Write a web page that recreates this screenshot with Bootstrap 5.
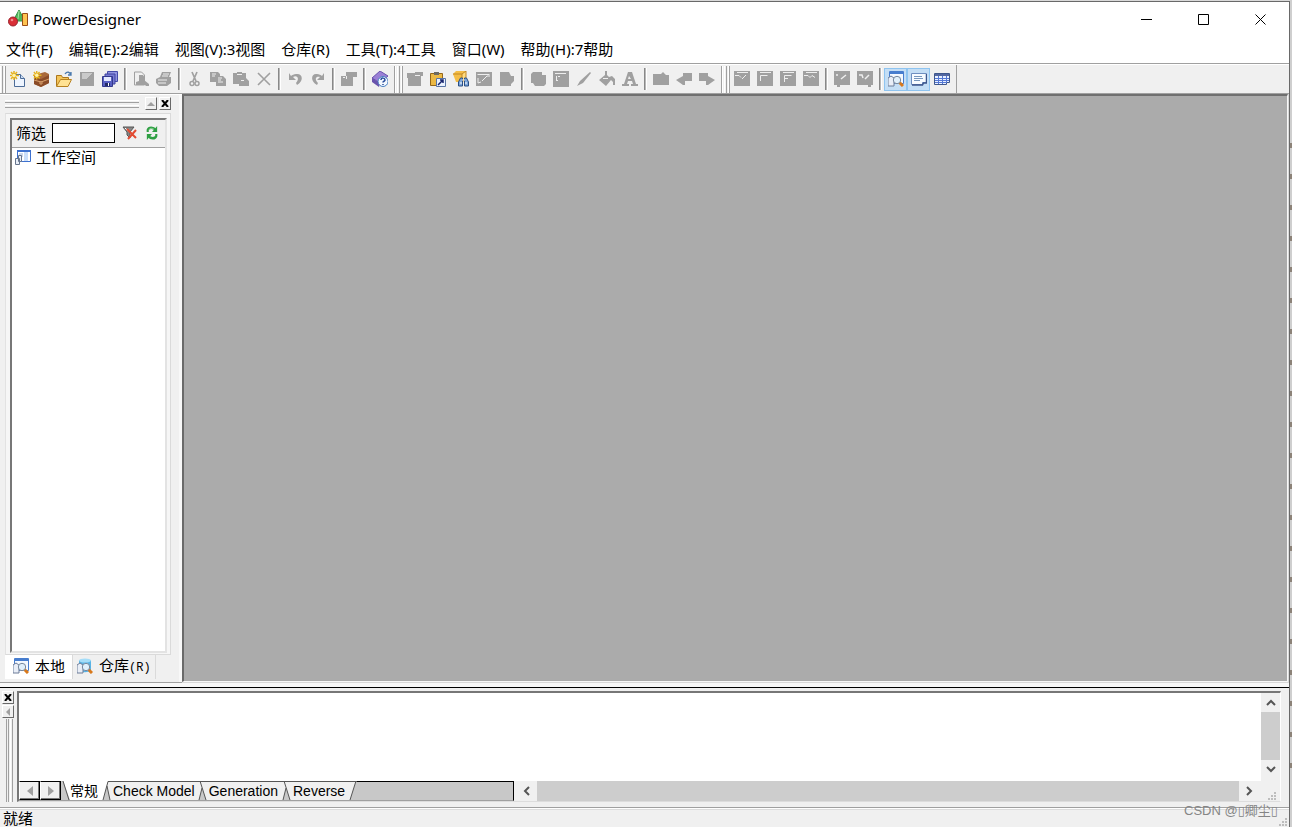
<!DOCTYPE html>
<html lang="zh-CN">
<head>
<meta charset="utf-8">
<meta name="viewport" content="width=device-width, initial-scale=1">
<title>PowerDesigner</title>
<link href="https://cdn.jsdelivr.net/npm/bootstrap@5.3.0/dist/css/bootstrap.min.css" rel="stylesheet">
<style>
:root{--face:#f0f0f0;--shade:#a0a0a0;--edge:#696969}
body{background:#d9d9d9;color:#000;font-family:"Noto Sans","Noto Sans CJK SC",sans-serif;font-size:15px;line-height:20px;overflow:hidden}
button{border:0;padding:0;background:none;color:inherit}
svg{display:block;flex:none}
.app{border-top:1px solid var(--edge);border-right:1px solid var(--edge);margin-top:1px;min-width:0}
.behind{width:2px;padding-top:143px;background:#cfcfcf}
.behind i{display:block;height:5px;margin-bottom:26px;background:#8c8278}
.title-row{height:34px;padding-left:8px}
.win-btn{width:57px;height:34px;display:grid;place-items:center}
.menu-row{height:27px;padding:0 0 2px 6px;gap:16px}
.menu-row a{color:#000;text-decoration:none;white-space:nowrap}
.tool-row{height:31px;border-top:1px solid var(--shade);background:var(--face);box-shadow:inset 0 1px #fff,inset 0 -1px var(--shade)}
.tb{width:23px;height:23px;padding:3px}
.tb.on{background:#c4def5;border:1px solid #8fc4f0;padding:2px}
.tb svg{width:16px;height:16px;margin-left:1px}
.g{fill:#a0a0a0;color:#a0a0a0}
.vsep{width:8px;height:22px;background:linear-gradient(90deg,#0000 3px,#888 3px 4px,#b8b8b8 4px 5px,#fff 5px 6px,#0000 6px)}
.grip{width:12px;height:27px;background:linear-gradient(90deg,#0000 3px,#a0a0a0 3px 4px,#fff 4px 5px,#0000 5px 6px,#fff 6px 7px,#0000 7px 8px,#a0a0a0 8px 9px,#0000 9px 10px,#fff 10px 11px,#a0a0a0 11px)}
.grip.first{width:6px;background:linear-gradient(90deg,#fff 1px,#0000 1px 2px,#a0a0a0 2px 3px,#0000 3px 4px,#fff 4px 5px,#a0a0a0 5px)}
.band-end{width:4px;height:28px;border-right:1px solid var(--shade)}
.browser{width:182px;background:var(--face);border-top:1px solid #fff;border-bottom:1px solid var(--shade);padding:2px 11px 3px 5px;box-shadow:inset -3px 0 #f8f8f8}
.ridge{height:3px;border-top:1px solid #fff;border-bottom:1px solid var(--shade)}
.ridge + .ridge{margin-top:2px}
.mini{width:12px;height:13px;background:var(--face);border:1px solid #fff;border-right-color:var(--edge);border-bottom-color:var(--edge);display:grid;place-items:center}
.caption{gap:2px;margin-bottom:3px}
.frame{border:1px solid #dadada;border-left-color:#e2e2e2;padding:4px 3px 1px 4px;background:#f6f6f6}
.sunk{border:2px solid #e3e3e3;border-top-color:#777;border-left-color:#777;background:#fff}
.filter-row{height:28px;background:var(--face);border-bottom:1px solid var(--shade);padding:0 0 1px 4px}
.filter-row input{width:63px;height:20px;border:1px solid #000;background:#fff;margin:0 7px 0 6px;padding:0 3px}
.tree-row{height:18px;padding:0 0 1px 3px;gap:5px}
.side-tab{height:24px;gap:6px;padding:0 7px 2px 8px;border-right:1px solid #dadada}
.side-tab.on{background:#fff}
.mono{font-family:"Liberation Mono",monospace;font-size:12px}
.mdi{background:#ababab;border-left:2px solid var(--edge);border-top:2px solid #707070;border-right:1px solid #f8f8f8;border-bottom:1px solid #f8f8f8;margin:0 1px 1px 0}
.output{height:124px;background:var(--face);border-top:4px solid #f8f8f8}
.output-in{border-top:1px solid #000;padding:3px 8px 5px 0}
.dock-grip{width:17px;padding-left:2px;gap:1px}
.bars{width:7px;border:solid;border-width:0 1px;border-color:#fff var(--shade);background:linear-gradient(90deg,#0000 1px,#a0a0a0 1px 2px,#0000 2px 3px,#fff 3px 4px,#0000 4px)}
.sunk.log{border-right-color:#fff;border-bottom-color:#ddd;border-width:2px 1px 1px 2px}
.log textarea{border:0;resize:none;outline:0;background:#fff}
.sb{width:19px;background:var(--face)}
.sb button{height:19px;display:grid;place-items:center}
.sb .thumb{height:48px;background:#cdcdcd}
.tab-row{height:20px;background:var(--face);font-family:"Liberation Sans","Noto Sans CJK SC",sans-serif;font-size:14px}
.strip{width:495px;background:#c8c8c8;border-right:1px solid #000;border-bottom:1px solid var(--shade);margin-right:2px}
.strip .rest{border-top:1px solid #000}
.spin{width:21px;background:var(--face);border:1px solid #000;border-left-color:#fff;box-shadow:inset -1px -1px #777;display:grid;place-items:center}
.otab{background:var(--face);border-top:1px solid #555;white-space:nowrap;line-height:18px}
.otab.on{background:#fff;border-color:#fff}
.hbar{width:21px;display:grid;place-items:center}
.status{height:20px;background:var(--face);border-top:1px solid var(--shade);box-shadow:inset 0 1px #fff,inset 0 2px #ddd;padding-left:3px}
.stamp{position:absolute;right:11px;bottom:6px;font-family:"Liberation Sans","Noto Sans CJK SC","DejaVu Sans",sans-serif;font-size:13px;color:#858585}
</style>
</head>
<body>
<svg width="0" height="0" class="position-absolute" aria-hidden="true">
<defs>
<symbol id="spark" viewBox="0 0 16 16"><path d="M4 0v9M0 4.500h9M1 1l6 7M7 1L1 8" stroke="#e5b21f" stroke-width="1.500"/><circle cx="4" cy="4.500" r="1.800" fill="#fff3a8"/></symbol>
<symbol id="lens" viewBox="0 0 16 16"><path d="M0 7l3-2 3 2v8H0z" fill="#e9eef7" stroke="#6c7c98"/><path d="M11 11l4 4" stroke="#d8791c" stroke-width="3"/><circle cx="9" cy="9" r="3.700" fill="#e1f0fb" stroke="#77889d"/></symbol>
</defs>
</svg>
<div class="d-flex vh-100">
<div class="app d-flex flex-column flex-grow-1 position-relative">
<header class="bg-white">
<div class="title-row d-flex align-items-center">
<svg width="21" height="20" viewBox="0 0 21 20"><path d="M5 12L11 1l6 11z" fill="#52b65c" stroke="#39974a"/><path d="M11 2l-1 8" stroke="#a6e4a5"/><path d="M14.500 4.500h5v12h-5z" fill="#ffc451" stroke="#9a4d18"/><circle cx="5" cy="12.500" r="4.500" fill="#d92f36" stroke="#99232d"/><circle cx="4" cy="11" r="1.300" fill="#f08c8c"/></svg>
<span class="ms-1 me-auto">PowerDesigner</span>
<button class="win-btn" aria-label="最小化"><svg width="11" height="11"><path d="M0 5.500h11" stroke="#000"/></svg></button>
<button class="win-btn" aria-label="最大化"><svg width="11" height="11"><path d="M.5.5h10v10H.5z" fill="none" stroke="#000"/></svg></button>
<button class="win-btn" aria-label="关闭"><svg width="11" height="11"><path d="M.5.5l10 10M10.500.5l-10 10" stroke="#000"/></svg></button>
</div>
<nav class="menu-row d-flex align-items-center">
<a href="#">文件(F)</a><a href="#">编辑(E):2编辑</a><a href="#">视图(V):3视图</a><a href="#">仓库(R)</a><a href="#">工具(T):4工具</a><a href="#">窗口(W)</a><a href="#">帮助(H):7帮助</a>
</nav>
</header>
<div class="tool-row d-flex align-items-center" role="toolbar">
<span class="grip first"></span>
<button class="tb" aria-label="新建模型"><svg viewBox="0 0 16 16"><path d="M4.500 3.500h6l4 4v8h-10z" fill="#eef5ff" stroke="#4c6c98"/><path d="M10.500 3.500v4h4" fill="#cbdcf2" stroke="#4c6c98"/><use href="#spark" width="16" height="16"/></svg></button>
<button class="tb" aria-label="新建项目"><svg viewBox="0 0 16 16"><path d="M1 4l11-3 4 2v9l-8 4-7-3z" fill="#a9693b"/><path d="M1 6l7 2 8-4v8l-8 4-7-3z" fill="#8b4c28"/><path d="M1 9l7 2 8-3M7 10v3h2v-3" fill="none" stroke="#d8a06c"/><use href="#spark" width="15" height="15"/></svg></button>
<button class="tb" aria-label="打开"><svg viewBox="0 0 16 16"><path d="M.5 15V4.500h5l1 2h6v3" fill="#f4c55a" stroke="#ac771c"/><path d="M.5 15.500l4-7h11l-3.500 7z" fill="#ffe293" stroke="#b78120"/><path d="M9 3c2-3 5-2 6 1m0-3v3h-3" fill="none" stroke="#4a79ad" stroke-width="1.300"/></svg></button>
<button class="tb" aria-label="保存"><svg class="g" viewBox="0 0 16 16" shape-rendering="crispEdges"><path d="M1 1h14v14H1z"/><path d="M3 2h10L7 8H3z" fill="#e6e6e6" fill-opacity=".6"/><path d="M13 3v2L8 9h5" fill="none" stroke="#a0a0a0"/></svg></button>
<button class="tb" aria-label="全部保存"><svg viewBox="0 0 16 16"><path d="M5.500.5h10v10h-10z" fill="#9094e0" stroke="#444aa8"/><path d="M3 3h10v10H3z" fill="#777bd4" stroke="#3e439f"/><path d="M.5 5.500h10v10H.5z" fill="#5960c3" stroke="#33398c"/><path d="M2 6h7v4H2z" fill="#e5eaff"/><path d="M3 12h5v3H3z" fill="#222b66"/><path d="M6 12h1v3H6z" fill="#fff"/></svg></button>
<span class="vsep"></span>
<button class="tb" aria-label="打印预览"><svg class="g" viewBox="0 0 16 16"><path d="M1.500 1v13h10V4l-3-3z" fill="none" stroke="currentColor"/><path d="M6 4h4l2 3-1 2 5 4v2h-3l-1-1H3v-3l3-1z"/></svg></button>
<button class="tb" aria-label="打印"><svg class="g" viewBox="0 0 16 16"><path d="M6 1h9l-2 5h2v6l-4 3H3l-3-3V8l4-2z"/><path d="M7 3h6M6 5h6M2 9h9M2 12h8" stroke="#eee"/></svg></button>
<span class="vsep"></span>
<button class="tb" aria-label="剪切"><svg class="g" viewBox="0 0 16 16"><path d="M5 1l4 9M10 1L6 10" stroke="currentColor" stroke-width="1.700"/><g fill="none" stroke="currentColor" stroke-width="1.500"><circle cx="5" cy="12.500" r="2"/><circle cx="10" cy="12.500" r="2"/></g></svg></button>
<button class="tb" aria-label="复制"><svg class="g" viewBox="0 0 16 16"><path d="M0 1h8l2 2v8H0zM6 5h7l3 3v7H6z"/><path d="M2 3h4M2 5h3M8 7h4M8 9h3M8 11h5" stroke="#eee"/></svg></button>
<button class="tb" aria-label="粘贴"><svg class="g" viewBox="0 0 16 16"><path d="M0 2h4V1h5v1h4v5l3 3v5H6v-2H0z"/><path d="M4 3.500h5M8 9.500h3" stroke="#eee" fill="none"/></svg></button>
<button class="tb" aria-label="删除"><svg class="g" viewBox="0 0 16 16"><path d="M2 2l12 12M14 2L2 14" stroke="currentColor" stroke-width="1.600"/></svg></button>
<span class="vsep"></span>
<button class="tb" aria-label="撤销"><svg class="g" viewBox="0 0 16 16"><path d="M2 2v7h7L6 6c4-2 7 1 3 6l1 2c7-4 6-12-1-11-2 0-4 1-5 2z"/></svg></button>
<button class="tb" aria-label="重做"><svg class="g" viewBox="0 0 16 16"><path d="M14 2v7H7l3-3C6 5 4 8 8 12l-1 2C0 10 1 2 7 3c2 0 4 1 5 2z"/></svg></button>
<span class="vsep"></span>
<button class="tb" aria-label="属性"><svg class="g" viewBox="0 0 16 16"><path d="M5 1h11v5h-4v9H0V5h5z"/><path d="M2 6.500h2M5.500 8V5" fill="none" stroke="#eee"/></svg></button>
<span class="vsep"></span>
<button class="tb" aria-label="帮助"><svg viewBox="0 0 16 16"><path d="M0 7l8-7 8 5-8 7z" fill="#9a80d6" stroke="#6953ad"/><path d="M0 7v4l7 5 1-4z" fill="#6953ad"/><circle cx="11" cy="10.500" r="5" fill="#f3f8ff" stroke="#477fc1"/><path d="M9 9c0-3 4-2 4 0 0 1.500-2 1-2 2.500M11 13v1" fill="none" stroke="#274b9b" stroke-width="1.500"/></svg></button>
<span class="grip"></span>
<button class="tb" aria-label="新建图"><svg class="g" viewBox="0 0 16 16"><path d="M0 2h8V1h8v4h-2v10H1V7H0z"/><path d="M8 4.500h5" stroke="#eee"/></svg></button>
<button class="tb" aria-label="粘贴为快捷方式"><svg viewBox="0 0 16 16"><path d="M.5 2.500h12v12H.5z" fill="#ecb944" stroke="#94671b"/><path d="M4 1h5v3H4z" fill="#6d6a62"/><path d="M6.500 7.500h9v8h-9z" fill="#eaf2ff" stroke="#5874a5"/><path d="M8 14l5-5m-3 0h3v3" fill="none" stroke="#17256d" stroke-width="1.500"/></svg></button>
<button class="tb" aria-label="查找对象"><svg viewBox="0 0 16 16"><path d="M0 3l3-3h10v8l-3 3H3z" fill="#f4bd47"/><path d="M0 3h9l4-3v8l-4 2V3" fill="#ffdb80" stroke="#c18725"/><path d="M5.500 15v-4l2-4h2v8zM11.500 15V7h2l2 4v4z" fill="#7da6db" stroke="#294e83"/><path d="M7 12h2M12 12h2M9 9h3" stroke="#fff"/></svg></button>
<button class="tb" aria-label="图表"><svg class="g" viewBox="0 0 16 16"><path d="M0 1h16v14H0z"/><path d="M1.500 3.500h12M2 7v5l3-1M6 10l5-5h3" fill="none" stroke="#eee"/></svg></button>
<button class="tb" aria-label="文档"><svg class="g" viewBox="0 0 16 16"><path d="M1 1h9l2 4h3v5l-3 3v2H1z"/></svg></button>
<span class="vsep"></span>
<button class="tb" aria-label="阴影"><svg class="g" viewBox="0 0 16 16"><path d="M3 1h9v3h4v9l-2 2H5l-2-3H1V3z"/></svg></button>
<button class="tb" aria-label="图像"><svg class="g" viewBox="0 0 16 16"><path d="M0 0h16v16H0z"/><path d="M2 2.500h11M3.500 5v4M3 9.500h2M5 5.500h2" fill="none" stroke="#eee"/></svg></button>
<button class="tb" aria-label="线条样式"><svg class="g" viewBox="0 0 16 16"><path d="M1 15l3-5L14 1l1 1-8 10z"/></svg></button>
<button class="tb" aria-label="填充"><svg class="g" viewBox="0 0 16 16"><path d="M6 0h2v4l2 2 3-1 3 3v6h-2v-3l-2-2-5 6-7-6 6-5z"/><path d="M4 7.500h5" stroke="#eee"/></svg></button>
<button class="tb" aria-label="字体"><svg class="g" viewBox="0 0 16 16"><path d="M6 1h4l4 12h2v2H9v-2h2l-1-3H6l-1 3h2v2H0v-2h2zm1 4L6 8h3z"/></svg></button>
<span class="vsep"></span>
<button class="tb" aria-label="上级"><svg class="g" viewBox="0 0 16 16"><path d="M0 3h8l2-2 3 3h3v10H0z"/></svg></button>
<button class="tb" aria-label="上一个"><svg class="g" viewBox="0 0 16 16"><path d="M7 2h9v8H9v4H7L0 9l7-4z"/></svg></button>
<button class="tb" aria-label="下一个"><svg class="g" viewBox="0 0 16 16"><path d="M9 2H0v8h7v4h2l7-5-7-4z"/></svg></button>
<span class="grip"></span>
<button class="tb" aria-label="视图一"><svg class="g" viewBox="0 0 16 16"><path d="M0 0h16v15H0z"/><path d="M3 1.500h11M1 4.500h4l2 2M8 8l4-4" fill="none" stroke="#eee"/></svg></button>
<button class="tb" aria-label="视图二"><svg class="g" viewBox="0 0 16 16"><path d="M0 0h16v15H0z"/><path d="M3 1.500h11M3.500 10V4.500h7" fill="none" stroke="#eee"/></svg></button>
<button class="tb" aria-label="视图三"><svg class="g" viewBox="0 0 16 16"><path d="M0 0h16v15H0z"/><path d="M3 1.500h11M4.500 11V4.500h7M5 7.500h3" fill="none" stroke="#eee"/></svg></button>
<button class="tb" aria-label="视图四"><svg class="g" viewBox="0 0 16 16"><path d="M0 0h16v15H0z"/><path d="M3 1.500h11M1 4.500h4l2 2 2-2 3 2" fill="none" stroke="#eee"/></svg></button>
<span class="vsep"></span>
<button class="tb" aria-label="检查"><svg class="g" viewBox="0 0 16 16"><path d="M0 0h16v14H6v2H3v-2H0z"/><path d="M2 4h2M7 8l5-4" stroke="#eee" stroke-width="1.500"/></svg></button>
<button class="tb" aria-label="生成"><svg class="g" viewBox="0 0 16 16"><path d="M0 0h16v14h-2v2h-3v-2H0z"/><path d="M2 4h3l1 3M8 8l4-4" fill="none" stroke="#eee" stroke-width="1.500"/></svg></button>
<span class="vsep"></span>
<button class="tb on" aria-label="浏览器" aria-pressed="true"><svg viewBox="0 0 16 16"><path d="M1.500.5h14v12h-14z" fill="#f4f9ff" stroke="#477dce"/><path d="M1 1h15v2H1z" fill="#477dce"/><use href="#lens" width="16" height="16"/></svg></button>
<button class="tb on" aria-label="输出" aria-pressed="true"><svg viewBox="0 0 16 16"><path d="M.5 2.500h15v9h-4v2h-11z" fill="#f7fbff" stroke="#6f8fc0"/><path d="M15.500 3v9h-3l-1 2H1" fill="none" stroke="#3f578c" stroke-width="1.500"/><path d="M3 5.500h8M3 7.500h9M3 9.500h6" stroke="#7897bd"/></svg></button>
<button class="tb" aria-label="结果列表"><svg viewBox="0 0 16 16"><path d="M.5 2.500h15v9h-3v2H.5z" fill="#eaf1ff" stroke="#3f578c"/><path d="M1 3h14v2H1z" fill="#5367a0"/><path d="M1 7.500h14M1 9.500h14M1 11.500h11M4.500 5v8M8.500 5v8M12.500 5v7" stroke="#5578d5"/></svg></button>
<span class="band-end"></span>
</div>

<main class="d-flex flex-grow-1" style="min-height:0">
<aside class="browser d-flex flex-column">
<div class="caption d-flex align-items-center">
<div class="flex-grow-1 me-1"><div class="ridge"></div><div class="ridge"></div></div>
<button class="mini" aria-label="折叠"><svg width="8" height="5"><path d="M0 5l4-4 4 4z" fill="#a0a0a0"/></svg></button>
<button class="mini" aria-label="关闭浏览器"><svg width="8" height="7"><path d="M1 0l6 7M7 0L1 7" stroke="#000" stroke-width="2"/></svg></button>
</div>
<div class="frame flex-grow-1 d-flex flex-column">
<div class="sunk flex-grow-1">
<div class="filter-row d-flex align-items-center"><label for="filter">筛选</label><input id="filter" type="text">
<button aria-label="清除筛选"><svg width="16" height="16" viewBox="0 0 16 16"><path d="M1 2h11L8 7v6l-3-3V7z" fill="#888" stroke="#555"/><path d="M3 3l3 3" stroke="#fff"/><path d="M5 4l9 9M14 5l-8 9" stroke="#e34b32" stroke-width="2"/></svg></button>
<button class="ms-2" aria-label="刷新"><svg width="12" height="16" viewBox="0 0 14 16" preserveAspectRatio="none"><path d="M2 7V5c1-3 7-3 9 0M12 9v2c-1 3-7 3-9 0" fill="none" stroke="#2e9f43" stroke-width="2.500"/><path d="M13 1v6H7zM1 15V9h6z" fill="#2e9f43"/><path d="M3 5c2-2 4-2 6-1" fill="none" stroke="#92d49a"/></svg></button></div>
<div class="tree-row d-flex align-items-center"><svg width="16" height="16" viewBox="0 0 16 16"><path d="M2.500 1.500h13v11h-13z" fill="#fff" stroke="#3e71cf"/><path d="M2 1h14v2H2z" fill="#3e71cf"/><path d="M9 3h4v9H9z" fill="#cadefa"/><path d="M4 5h4M4 7h4" stroke="#98b0d8"/><path d="M3.500 6.500h3v6h-3zM.5 9.500h4v6h-4z" fill="#e9eef7" stroke="#66758d"/></svg><span>工作空间</span></div>
</div></div>
<div class="d-flex">
<button class="side-tab on d-flex align-items-center"><svg width="16" height="16" viewBox="0 0 16 16"><path d="M1.500.5h14v12h-14z" fill="#f4f9ff" stroke="#477dce"/><path d="M1 1h15v2H1z" fill="#477dce"/><use href="#lens" width="16" height="16"/></svg>本地</button>
<button class="side-tab d-flex align-items-center ps-1 pe-1"><svg width="16" height="16" viewBox="0 0 16 16"><path d="M2 2v10c2 3 10 3 12 0V2z" fill="#59b3e5"/><ellipse cx="8" cy="2.500" rx="6" ry="2" fill="#a5ddf8"/><use href="#lens" width="16" height="16"/></svg><span>仓库<span class="mono">(R)</span></span></button>
</div>
</aside>
<section class="mdi flex-grow-1"></section>
</main>

<section class="output d-flex flex-column">
<div class="output-in d-flex flex-grow-1">
<div class="dock-grip d-flex flex-column">
<button class="mini" aria-label="关闭输出"><svg width="8" height="7"><path d="M1 0l6 7M7 0L1 7" stroke="#000" stroke-width="2"/></svg></button>
<button class="mini" aria-label="收起输出"><svg width="6" height="8"><path d="M5 0v8L1 4z" fill="#a0a0a0"/></svg></button>
<div class="bars flex-grow-1 ms-1"></div>
</div>
<div class="sunk log flex-grow-1 d-flex flex-column">
<div class="d-flex flex-grow-1"><textarea class="flex-grow-1" aria-label="输出" readonly></textarea>
<div class="sb d-flex flex-column"><button aria-label="向上"><svg width="10" height="7"><path d="M1 6l4-4 4 4" fill="none" stroke="#555" stroke-width="2"/></svg></button><div class="thumb"></div><button aria-label="向下"><svg width="10" height="7"><path d="M1 1l4 4 4-4" fill="none" stroke="#555" stroke-width="2"/></svg></button></div></div>
<div class="tab-row d-flex">
<div class="strip d-flex">
<button class="spin" aria-label="上一页"><svg width="6" height="10"><path d="M6 0v10L0 5z" fill="#a0a0a0"/></svg></button>
<button class="spin" aria-label="下一页"><svg width="6" height="10"><path d="M0 0v10l6-5z" fill="#a0a0a0"/></svg></button>
<svg width="9" height="19"><path d="M2 0h7v19z" fill="#fff"/><path d="M2 0l6 19" stroke="#555"/></svg>
<button class="otab on">常规</button>
<svg width="15" height="19"><path d="M0 0h10L5 19H0z" fill="#fff"/><path d="M10 0h5v19h-3L9 5z" fill="#f0f0f0"/><path d="M15 .5h-5L5 19M9 5l3 14" fill="none" stroke="#555"/></svg>
<button class="otab">Check Model</button>
<svg width="14" height="19"><path d="M0 0h14v19h-3L7 7 4 19H0z" fill="#f0f0f0"/><path d="M0 .5h14M5 0l6 19M7 7L4 19" stroke="#555" fill="none"/></svg>
<button class="otab">Generation</button>
<svg width="15" height="19"><path d="M0 0h15v19h-3L8 7 5 19H0z" fill="#f0f0f0"/><path d="M0 .5h15M6 0l6 19M8 7L5 19" stroke="#555" fill="none"/></svg>
<button class="otab">Reverse</button>
<svg width="12" height="19"><path d="M0 0h11L5 19H0z" fill="#f0f0f0"/><path d="M0 .5h12M11 0L5 19" stroke="#555" fill="none"/></svg>
<div class="rest flex-grow-1"></div>
</div>
<button class="hbar" aria-label="向左"><svg width="7" height="10"><path d="M6 1L2 5l4 4" fill="none" stroke="#555" stroke-width="2"/></svg></button>
<div class="flex-grow-1" style="background:#cdcdcd"></div>
<button class="hbar" aria-label="向右"><svg width="7" height="10"><path d="M1 1l4 4-4 4" fill="none" stroke="#555" stroke-width="2"/></svg></button>
<svg class="align-self-end ms-2" width="12" height="9"><path d="M6 0h2v2H6zM3 3h2v2H3zM6 3h2v2H6zM0 6h2v2H0zM3 6h2v2H3zM6 6h2v2H6z" fill="#bdbdbd"/></svg>
</div></div></div>
</section>
<footer class="status d-flex align-items-center"><span class="me-auto">就绪</span><svg class="align-self-end" width="10" height="9"><path d="M6 0h2v2H6zM3 3h2v2H3zM6 3h2v2H6zM0 6h2v2H0zM3 6h2v2H3zM6 6h2v2H6z" fill="#bdbdbd"/></svg></footer>
<div class="stamp">CSDN @▯卿尘▯</div>
</div>
<div class="behind overflow-hidden" aria-hidden="true"><i></i><i></i><i></i><i></i><i></i><i></i><i></i><i></i><i></i><i></i><i></i><i></i><i></i><i></i><i></i><i></i><i></i><i></i><i></i><i></i><i></i></div>
</div>
<script src="https://cdn.jsdelivr.net/npm/bootstrap@5.3.0/dist/js/bootstrap.bundle.min.js"></script>
</body>
</html>
